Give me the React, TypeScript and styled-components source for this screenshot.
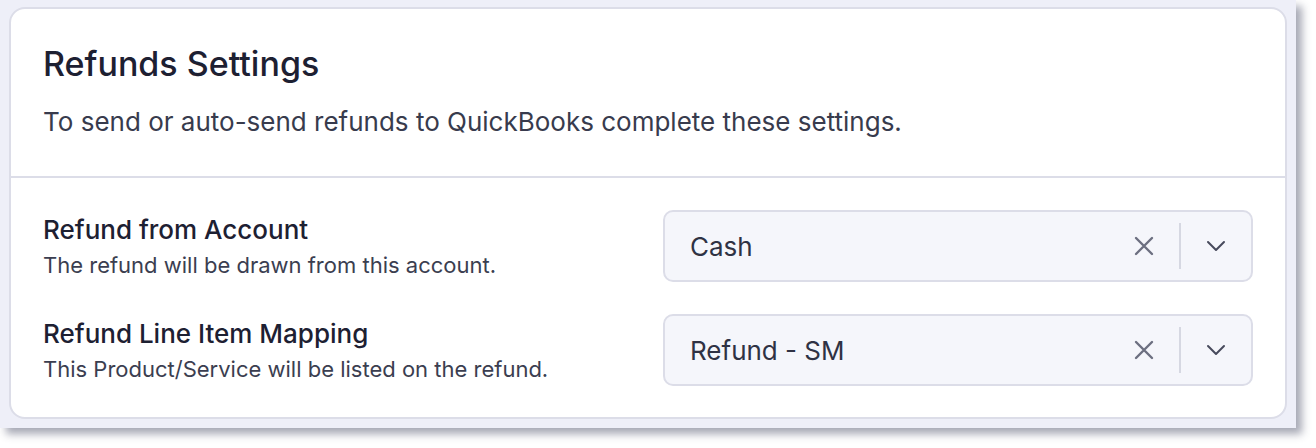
import * as React from 'react'
import styled, { createGlobalStyle } from 'styled-components'

const GlobalStyle = createGlobalStyle`
  body {
    margin: 0;
    min-height: 100vh;
    background: #ffffff;
    font-family: Inter, Roboto, "Liberation Sans", sans-serif;
  }
`

const Frame = styled.div`
  width: 1296px;
  height: 428px;
  box-sizing: border-box;
  padding: 7px 9px 9px 9px;
  background: #eeeff8;
  box-shadow: 6px 6px 8px rgba(60, 64, 90, 0.45);
`

const Card = styled.div`
  height: 100%;
  box-sizing: border-box;
  background: #ffffff;
  border: 2px solid #dcdde8;
  border-radius: 16px;
  overflow: hidden;
`

const Header = styled.div`
  padding: 36px 32px 37px;
  border-bottom: 2px solid #dcdde8;
`

const Title = styled.h2`
  margin: 0;
  font-size: 34px;
  line-height: 38px;
  font-weight: 500;
  color: #1d2032;
`

const Subtitle = styled.p`
  margin: 22px 0 0;
  font-size: 26px;
  line-height: 34px;
  color: #383b4d;
`

const Body = styled.div`
  display: grid;
  gap: 32px;
  padding: 32px 32px 32px;
`

const Row = styled.div`
  display: grid;
  grid-template-columns: 1fr 590px;
  align-items: center;
  gap: 24px;
`

const Field = styled.div`
  display: grid;
  gap: 5px;
`

const Label = styled.div`
  font-size: 26px;
  line-height: 32px;
  font-weight: 500;
  color: #1d2032;
`

const Description = styled.div`
  font-size: 22px;
  line-height: 28px;
  color: #3b3e50;
`

const Select = styled.div`
  display: flex;
  align-items: center;
  height: 72px;
  box-sizing: border-box;
  padding: 0 0 0 25px;
  background: #f5f6fb;
  border: 2px solid #dcdde8;
  border-radius: 10px;
`

const Value = styled.span`
  flex: 1;
  font-size: 26px;
  color: #2f3244;
`

const IconButton = styled.span`
  display: flex;
  align-items: center;
  justify-content: center;
  width: 70px;
  height: 100%;
`

const Separator = styled.span`
  width: 2px;
  height: 46px;
  background: #d6d8e2;
`

const ClearIcon = () => (
  <svg width="20" height="20" viewBox="0 0 20 20">
    <path d="M2 2L18 18M18 2L2 18" stroke="#6c6f80" strokeWidth="2.4" strokeLinecap="round" />
  </svg>
)

const ChevronIcon = () => (
  <svg width="20" height="12" viewBox="0 0 20 12">
    <path d="M2 2L10 10L18 2" stroke="#474a5c" strokeWidth="2" fill="none" strokeLinecap="round" strokeLinejoin="round" />
  </svg>
)

const settings = [
  {
    label: 'Refund from Account',
    description: 'The refund will be drawn from this account.',
    value: 'Cash',
  },
  {
    label: 'Refund Line Item Mapping',
    description: 'This Product/Service will be listed on the refund.',
    value: 'Refund - SM',
  },
]

const App: React.FC = () => {
  return (
    <>
      <GlobalStyle />
      <Frame>
        <Card>
          <Header>
            <Title>Refunds Settings</Title>
            <Subtitle>To send or auto-send refunds to QuickBooks complete these settings.</Subtitle>
          </Header>

          <Body>
            {settings.map((item) => (
              <Row key={item.label}>
                <Field>
                  <Label>{item.label}</Label>
                  <Description>{item.description}</Description>
                </Field>

                <Select>
                  <Value>{item.value}</Value>
                  <IconButton><ClearIcon /></IconButton>
                  <Separator />
                  <IconButton><ChevronIcon /></IconButton>
                </Select>
              </Row>
            ))}
          </Body>
        </Card>
      </Frame>
    </>
  )
}

export default App
